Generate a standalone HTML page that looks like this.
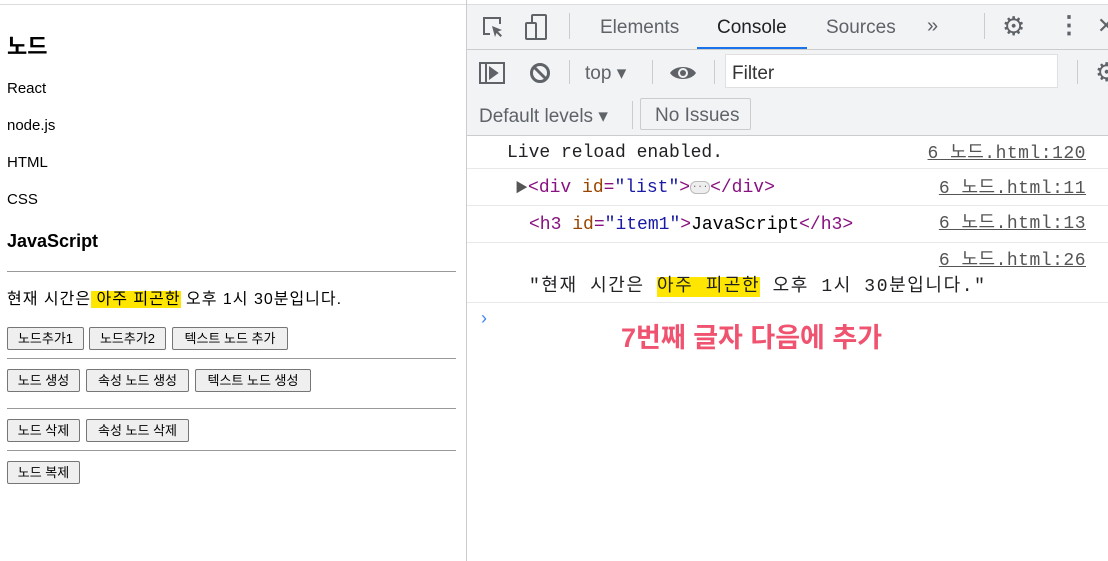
<!DOCTYPE html>
<html><head><meta charset="utf-8"><style>
*{margin:0;padding:0;box-sizing:border-box}
body{width:1108px;height:561px;overflow:hidden;background:#fff;position:relative;font-family:"Liberation Sans","Noto Sans CJK KR",sans-serif;color:#000}
.a{position:absolute;white-space:nowrap}
.hr{position:absolute;left:7px;width:449px;height:0;border-top:1px solid #999}
.btn{position:absolute;height:23px;border:1px solid #767676;border-radius:2px;background:#efefef;font-size:13px;line-height:21px;text-align:center}
.dt{position:absolute;left:466px;top:0;width:642px;height:561px;border-left:1px solid #ccc}
.tb{position:absolute;left:0;width:642px;background:#f1f3f4}
.mono{font-family:"Liberation Mono","Noto Sans CJK KR",monospace;font-size:18px;line-height:22px}
.row{position:absolute;left:0;width:642px;border-bottom:1px solid #e8e8e8}
.lnk{position:absolute;right:22px;text-decoration:underline;color:#555;font-family:"Liberation Mono","Noto Sans CJK KR",monospace;font-size:18px;line-height:22px;letter-spacing:0.5px}
.sep{position:absolute;width:1px;background:#ccc}
.g{color:#5f6368}
</style></head><body>
<div class="a" style="left:0;top:4px;width:466px;border-top:1px solid #ddd"></div>
<div class="a" style="left:7px;top:29px;font-size:22px;font-weight:bold">노드</div>
<div class="a" style="left:7px;top:80px;font-size:15px">React</div>
<div class="a" style="left:7px;top:117px;font-size:15px">node.js</div>
<div class="a" style="left:7px;top:154px;font-size:15px">HTML</div>
<div class="a" style="left:7px;top:191px;font-size:15px">CSS</div>
<div class="a" style="left:7px;top:231px;font-size:18px;font-weight:bold">JavaScript</div>
<div class="hr" style="top:271px"></div>
<div class="a" style="left:7px;top:290px;font-size:16px;line-height:20px;letter-spacing:1px">현재 시간은<span style="background:#ffe600"> 아주 피곤한</span> 오후 1시 30분입니다.</div>
<div class="btn" style="left:7px;top:327px;width:77px">노드추가1</div>
<div class="btn" style="left:89px;top:327px;width:77px">노드추가2</div>
<div class="btn" style="left:172px;top:327px;width:116px">텍스트 노드 추가</div>
<div class="hr" style="top:358px"></div>
<div class="btn" style="left:7px;top:369px;width:73px">노드 생성</div>
<div class="btn" style="left:86px;top:369px;width:103px">속성 노드 생성</div>
<div class="btn" style="left:195px;top:369px;width:116px">텍스트 노드 생성</div>
<div class="hr" style="top:408px"></div>
<div class="btn" style="left:7px;top:419px;width:73px">노드 삭제</div>
<div class="btn" style="left:86px;top:419px;width:103px">속성 노드 삭제</div>
<div class="hr" style="top:450px"></div>
<div class="btn" style="left:7px;top:461px;width:73px">노드 복제</div>

<div class="dt">
<div class="tb" style="top:0;height:5px;background:#fff;border-bottom:1px solid #ddd"></div>
<div class="tb" style="top:5px;height:45px;border-bottom:1px solid #ccc"></div>
<div class="tb" style="top:50px;height:46px"></div>
<div class="tb" style="top:96px;height:40px;border-bottom:1px solid #ccc"></div>
<svg class="a" style="left:14px;top:15px" width="26" height="26" viewBox="0 0 26 26" fill="none" stroke="#5f6368" stroke-width="2"><path d="M9 19H3V3h16v6"/><path d="M11 11l10 4-4 1.5 4 4-1.5 1.5-4-4L14 22z" fill="#5f6368" stroke="none"/></svg>
<svg class="a" style="left:57px;top:13px" width="28" height="28" viewBox="0 0 28 28" fill="none" stroke="#5f6368" stroke-width="2"><rect x="8" y="2" width="14" height="24" rx="1"/><rect x="2" y="10" width="10" height="16" rx="1" fill="#f1f3f4"/></svg>
<div class="sep" style="left:102px;top:13px;height:26px"></div>
<div class="a g" style="left:133px;top:17px;font-size:19px">Elements</div>
<div class="a" style="left:250px;top:17px;font-size:19px;color:#202124">Console</div>
<div class="a" style="left:230px;top:47px;width:110px;height:2px;background:#1a73e8"></div>
<div class="a g" style="left:359px;top:17px;font-size:19px">Sources</div>
<div class="a g" style="left:460px;top:15px;font-size:20px">»</div>
<div class="sep" style="left:517px;top:13px;height:26px"></div>
<div class="a g" style="left:535px;top:11px;font-size:26px">⚙</div>
<div class="a g" style="left:590px;top:11px;font-size:24px;font-weight:bold">⋮</div>
<div class="a g" style="left:630px;top:13px;font-size:22px">✕</div>
<svg class="a" style="left:12px;top:62px" width="26" height="22" viewBox="0 0 26 22" fill="none" stroke="#5f6368" stroke-width="2"><rect x="1" y="1" width="24" height="20"/><path d="M7 1v20"/><path d="M11 6l7 5-7 5z" fill="#5f6368"/></svg>
<svg class="a" style="left:62px;top:62px" width="22" height="22" viewBox="0 0 22 22" fill="none" stroke="#5f6368" stroke-width="3"><circle cx="11" cy="11" r="8.5"/><path d="M5 5l12 12"/></svg>
<div class="sep" style="left:102px;top:60px;height:24px"></div>
<div class="a g" style="left:118px;top:62px;font-size:19px">top ▾</div>
<div class="sep" style="left:185px;top:60px;height:24px"></div>
<svg class="a" style="left:202px;top:63px" width="28" height="20" viewBox="0 0 28 20"><path d="M1 10C6 2 22 2 27 10 22 18 6 18 1 10z" fill="#5f6368"/><circle cx="14" cy="10" r="5" fill="#f1f3f4"/><circle cx="14" cy="10" r="3" fill="#5f6368"/></svg>
<div class="sep" style="left:247px;top:60px;height:24px"></div>
<div class="a" style="left:258px;top:54px;width:333px;height:34px;background:#fff;border:1px solid #e0e0e0"></div>
<div class="a" style="left:265px;top:63px;font-size:19px;color:#333">Filter</div>
<div class="sep" style="left:610px;top:60px;height:24px"></div>
<div class="a g" style="left:628px;top:57px;font-size:26px">⚙</div>
<div class="a g" style="left:12px;top:105px;font-size:19px">Default levels ▾</div>
<div class="sep" style="left:165px;top:101px;height:28px"></div>
<div class="a" style="left:173px;top:98px;width:111px;height:32px;border:1px solid #ccc;border-radius:2px;background:#f1f3f4"></div>
<div class="a g" style="left:188px;top:105px;font-size:19px">No Issues</div>
<div class="row" style="top:136px;height:33px"></div>
<div class="a mono" style="left:40px;top:142px;color:#202124">Live reload enabled.</div>
<div class="lnk" style="top:143px">6_노드.html:120</div>
<div class="row" style="top:169px;height:37px"></div>
<div class="a mono" style="left:48px;top:177px"><span style="font-size:13px;color:#555">▶</span><span style="color:#881280">&lt;div </span><span style="color:#994500">id</span><span style="color:#881280">=</span><span style="color:#1a1aa6">"list"</span><span style="color:#881280">&gt;</span><span style="display:inline-block;width:20px;height:13px;border:1px solid #bbb;border-radius:6px;background:#eee;font-size:9px;line-height:10px;text-align:center;vertical-align:middle;color:#666">···</span><span style="color:#881280">&lt;/div&gt;</span></div>
<div class="lnk" style="top:178px">6_노드.html:11</div>
<div class="row" style="top:206px;height:37px"></div>
<div class="a mono" style="left:62px;top:214px"><span style="color:#881280">&lt;h3 </span><span style="color:#994500">id</span><span style="color:#881280">=</span><span style="color:#1a1aa6">"item1"</span><span style="color:#881280">&gt;</span>JavaScript<span style="color:#881280">&lt;/h3&gt;</span></div>
<div class="lnk" style="top:213px">6_노드.html:13</div>
<div class="row" style="top:243px;height:60px"></div>
<div class="lnk" style="top:250px">6_노드.html:26</div>
<div class="a mono" style="left:62px;top:276px;color:#202124;letter-spacing:1.6px">"현재 시간은 <span style="background:#ffe600">아주 피곤한</span> 오후 1시 30분입니다."</div>
<div class="a" style="left:14px;top:308px;font-size:18px;color:#4285f4">›</div>
<div class="a" style="left:154px;top:320px;font-size:27px;font-weight:bold;color:#ef5370;line-height:36px">7번째 글자 다음에 추가</div>
</div>
</body></html>
